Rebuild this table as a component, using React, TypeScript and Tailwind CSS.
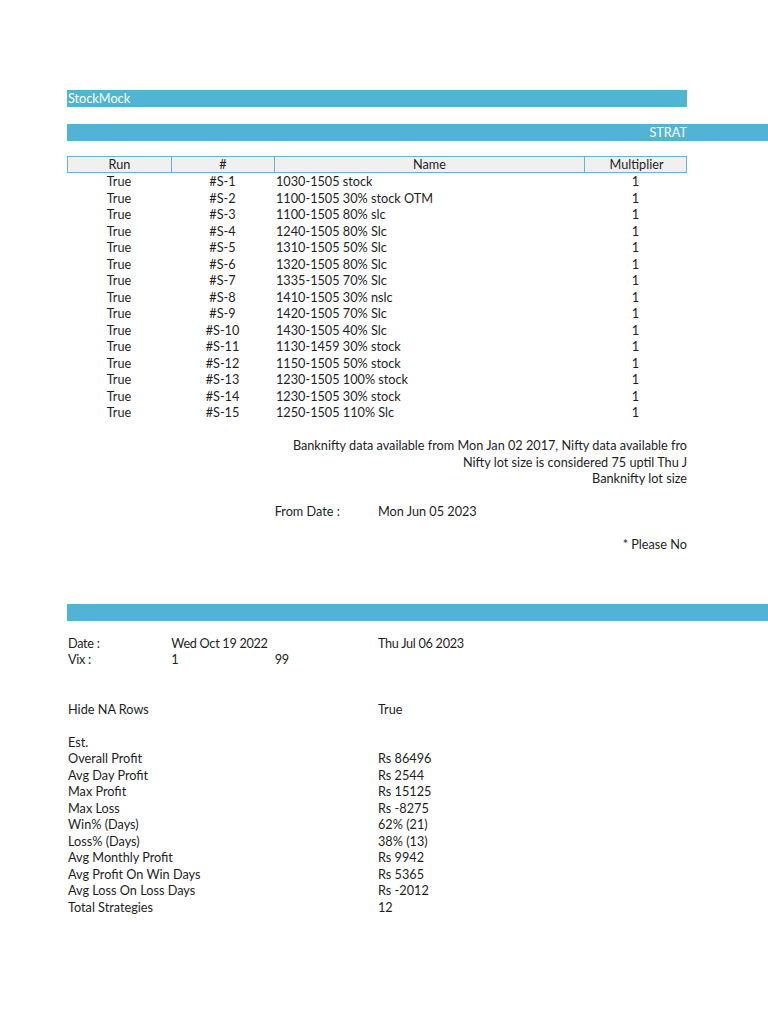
import React from "react";

const rows = [
  ["#S-1", "1030-1505 stock"],
  ["#S-2", "1100-1505 30% stock OTM"],
  ["#S-3", "1100-1505 80% slc"],
  ["#S-4", "1240-1505 80% Slc"],
  ["#S-5", "1310-1505 50% Slc"],
  ["#S-6", "1320-1505 80% Slc"],
  ["#S-7", "1335-1505 70% Slc"],
  ["#S-8", "1410-1505 30% nslc"],
  ["#S-9", "1420-1505 70% Slc"],
  ["#S-10", "1430-1505 40% Slc"],
  ["#S-11", "1130-1459 30% stock"],
  ["#S-12", "1150-1505 50% stock"],
  ["#S-13", "1230-1505 100% stock"],
  ["#S-14", "1230-1505 30% stock"],
  ["#S-15", "1250-1505 110% Slc"],
];

const stats = [
  ["Overall Profit", "Rs 86496"],
  ["Avg Day Profit", "Rs 2544"],
  ["Max Profit", "Rs 15125"],
  ["Max Loss", "Rs -8275"],
  ["Win% (Days)", "62% (21)"],
  ["Loss% (Days)", "38% (13)"],
  ["Avg Monthly Profit", "Rs 9942"],
  ["Avg Profit On Win Days", "Rs 5365"],
  ["Avg Loss On Loss Days", "Rs -2012"],
  ["Total Strategies", "12"],
];

function Row({ children, className = "" }: { children?: React.ReactNode; className?: string }) {
  return (
    <div className={"h-[16.5px] leading-[16.5px] w-[620px] ml-[67px] grid grid-cols-6 whitespace-nowrap overflow-hidden " + className}>
      {children}
    </div>
  );
}

export default function App() {
  return (
    <div className="w-[768px] h-[1024px] bg-white overflow-hidden pt-[90px] text-[12.7px] text-[#1e1e1e] font-['Lato','Carlito',sans-serif]">
      {/* StockMock bar */}
      <div className="ml-[67px] w-[620px] h-[17px] leading-[17px] bg-[#52b4d5] text-white pl-[1px]">StockMock</div>
      <div className="h-[17px]" />
      {/* STRAT bar */}
      <div className="ml-[67px] h-[17px] leading-[17px] bg-[#52b4d5]">
        <div className="w-[620px] overflow-hidden text-right text-white whitespace-nowrap">STRAT</div>
      </div>
      <div className="h-[15px]" />
      {/* table header */}
      <div className="ml-[67px] w-[620px] h-[17px] grid grid-cols-[104px_103px_310px_103px] bg-[#f0f0f0] border border-[#62b7d8] leading-[15px]">
        <div className="text-center border-r border-[#62b7d8]">Run</div>
        <div className="text-center border-r border-[#62b7d8]">#</div>
        <div className="text-center border-r border-[#62b7d8]">Name</div>
        <div className="text-center">Multiplier</div>
      </div>
      {rows.map(([id, name]) => (
        <div key={id} className="ml-[67px] w-[620px] h-[16.5px] leading-[16.5px] grid grid-cols-[104px_103px_310px_103px] whitespace-nowrap">
          <div className="text-center">True</div>
          <div className="text-center">{id}</div>
          <div className="pl-[2px]">{name}</div>
          <div className="text-center">1</div>
        </div>
      ))}
      <div className="h-[16.5px]" />
      {/* notes */}
      <div className="ml-[67px] w-[620px] overflow-hidden">
        <div className="h-[16.5px] leading-[16.5px] whitespace-nowrap flex justify-end">
          <span>Banknifty data available from Mon Jan 02 2017, Nifty data available fro</span>
        </div>
        <div className="h-[16.5px] leading-[16.5px] whitespace-nowrap flex justify-end">
          <span>Nifty lot size is considered 75 uptil Thu J</span>
        </div>
        <div className="h-[16.5px] leading-[16.5px] whitespace-nowrap flex justify-end">
          <span>Banknifty lot size</span>
        </div>
      </div>
      <div className="h-[16.5px]" />
      <Row>
        <div />
        <div />
        <div className="pl-[1px]">From Date :</div>
        <div className="pl-[1px] col-span-2">Mon Jun 05 2023</div>
      </Row>
      <div className="h-[16.5px]" />
      <div className="ml-[67px] w-[620px] h-[16.5px] leading-[16.5px] whitespace-nowrap overflow-hidden flex justify-end">
        <span>* Please No</span>
      </div>
      <div className="h-[51px]" />
      {/* third bar */}
      <div className="ml-[67px] h-[17px] bg-[#52b4d5]" />
      <div className="h-[14px]" />
      <Row className="tracking-[-0.3px]">
        <div className="pl-[1px]">Date :</div>
        <div className="pl-[1px] col-span-2">Wed Oct 19 2022</div>
        <div className="pl-[1px] col-span-2">Thu Jul 06 2023</div>
      </Row>
      <Row className="tracking-[-0.3px]">
        <div className="pl-[1px]">Vix :</div>
        <div className="pl-[1px]">1</div>
        <div className="pl-[1px]">99</div>
      </Row>
      <Row />
      <Row />
      <Row>
        <div className="pl-[1px] col-span-3">Hide NA Rows</div>
        <div className="pl-[1px]">True</div>
      </Row>
      <Row />
      <Row>
        <div className="pl-[1px]">Est.</div>
      </Row>
      {stats.map(([k, v]) => (
        <Row key={k}>
          <div className="pl-[1px] col-span-3">{k}</div>
          <div className="pl-[1px] col-span-2">{v}</div>
        </Row>
      ))}
    </div>
  );
}
